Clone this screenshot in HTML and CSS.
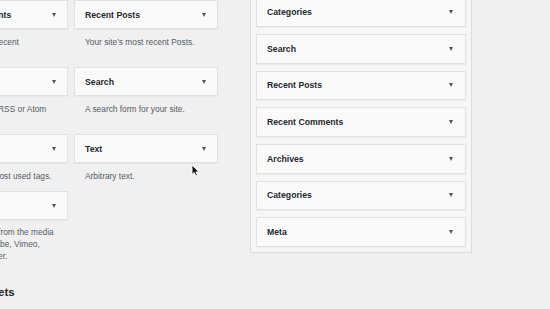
FILE: index.html
```html
<!DOCTYPE html>
<html lang="en">
<head>
<meta charset="utf-8">
<title>Widgets</title>
<link rel="stylesheet" href="styles.css">
</head>
<body>
<div class="screen">
  <section class="available">
    <div class="columns">
      <div class="col">
        <div class="widget">
          <div class="widget-top"><span class="widget-title">Recent Comments</span><span class="arrow"></span></div>
          <p class="widget-desc">Your site’s most recent</p>
        </div>
        <div class="widget">
          <div class="widget-top"><span class="widget-title">RSS</span><span class="arrow"></span></div>
          <p class="widget-desc">Entries from any RSS or Atom</p>
        </div>
        <div class="widget widget--tight">
          <div class="widget-top"><span class="widget-title">Tag Cloud</span><span class="arrow"></span></div>
          <p class="widget-desc">A cloud of your most used tags.</p>
        </div>
        <div class="widget widget--last">
          <div class="widget-top"><span class="widget-title">Video</span><span class="arrow"></span></div>
          <p class="widget-desc">Displays a video from the media<br>library or a YouTube, Vimeo,<br>or another provider.</p>
        </div>
      </div>
      <div class="col">
        <div class="widget">
          <div class="widget-top"><span class="widget-title">Recent Posts</span><span class="arrow"></span></div>
          <p class="widget-desc">Your site’s most recent Posts.</p>
        </div>
        <div class="widget">
          <div class="widget-top"><span class="widget-title">Search</span><span class="arrow"></span></div>
          <p class="widget-desc">A search form for your site.</p>
        </div>
        <div class="widget">
          <div class="widget-top"><span class="widget-title">Text</span><span class="arrow"></span></div>
          <p class="widget-desc">Arbitrary text.</p>
        </div>
      </div>
    </div>
    <h2 class="section-title">Inactive Widgets</h2>
  </section>

  <aside class="sidebar">
    <div class="sb-widget"><span class="widget-title">Categories</span><span class="arrow"></span></div>
    <div class="sb-widget"><span class="widget-title">Search</span><span class="arrow"></span></div>
    <div class="sb-widget"><span class="widget-title">Recent Posts</span><span class="arrow"></span></div>
    <div class="sb-widget"><span class="widget-title">Recent Comments</span><span class="arrow"></span></div>
    <div class="sb-widget"><span class="widget-title">Archives</span><span class="arrow"></span></div>
    <div class="sb-widget"><span class="widget-title">Categories</span><span class="arrow"></span></div>
    <div class="sb-widget"><span class="widget-title">Meta</span><span class="arrow"></span></div>
  </aside>
</div>

<svg class="cursor" width="9" height="13" viewBox="0 0 9 13" aria-hidden="true">
  <path d="M1 1 L1 10.5 L3.2 8.5 L4.8 12 L6.4 11.3 L4.9 7.9 L7.9 7.9 Z" fill="#111" stroke="#fff" stroke-width="0.9" stroke-linejoin="round"/>
</svg>
</body>
</html>
```

FILE: styles.css
```css
html, body {
  margin: 0;
  padding: 0;
}

body {
  width: 550px;
  height: 309px;
  overflow: hidden;
  background: #f0f0f0;
  font-family: "Liberation Sans", Arial, sans-serif;
  color: #23282d;
  position: relative;
}

.screen {
  display: flex;
  align-items: flex-start;
}

.available {
  margin-left: -76px;
  width: 294px;
  flex: none;
}

.columns {
  display: flex;
  gap: 6px;
  align-items: flex-start;
}

.col {
  width: 144px;
  display: flex;
  flex-direction: column;
}

.widget {
  margin-bottom: 19px;
}

.widget--tight {
  margin-bottom: 9px;
}

.widget--last {
  margin-bottom: 0;
}

.widget-top {
  box-sizing: border-box;
  height: 29.33px;
  border: 1px solid #e1e1e1;
  background: #fafafa;
  box-shadow: 0 1px 1px rgba(0, 0, 0, 0.03);
  display: flex;
  align-items: center;
  justify-content: space-between;
  padding: 0 11px 0 10px;
}

.widget-title {
  font-weight: bold;
  font-size: 8.7px;
  white-space: nowrap;
  color: #23282d;
}

.arrow {
  width: 0;
  height: 0;
  border-left: 2.5px solid transparent;
  border-right: 2.5px solid transparent;
  border-top: 4px solid #555;
  flex: none;
}

.widget-desc {
  margin: 6.67px 0 0;
  padding: 0 11px;
  font-size: 8.35px;
  line-height: 12px;
  color: #555d66;
  white-space: nowrap;
}

.widget--last .widget-desc {
  margin-top: 6px;
}

.section-title {
  margin: 0;
  padding-top: 22px;
  font-size: 11.5px;
  line-height: 16px;
  font-weight: bold;
  color: #23282d;
  white-space: nowrap;
}

.sidebar {
  flex: none;
  box-sizing: border-box;
  width: 222px;
  margin-left: 32px;
  margin-top: -10px;
  padding: 6.33px 5px 5.3px;
  border: 1px solid #dcdcdc;
  background: #f6f6f6;
  display: flex;
  flex-direction: column;
  gap: 7px;
}

.sb-widget {
  box-sizing: border-box;
  height: 29.67px;
  border: 1px solid #e1e1e1;
  background: #fafafa;
  box-shadow: 0 1px 1px rgba(0, 0, 0, 0.03);
  display: flex;
  align-items: center;
  justify-content: space-between;
  padding: 0 12px 0 10px;
}

.cursor {
  position: absolute;
  left: 191px;
  top: 164px;
}
```
